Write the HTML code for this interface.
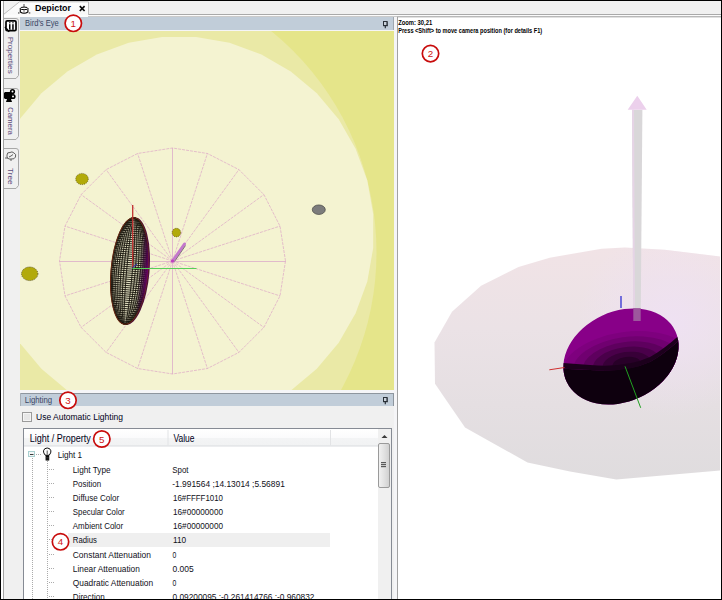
<!DOCTYPE html>
<html><head><meta charset="utf-8">
<style>
html,body{margin:0;padding:0;}
body{width:722px;height:600px;overflow:hidden;position:relative;background:#f0f0f0;font-family:"Liberation Sans",sans-serif;}
svg{position:absolute;left:0;top:0;}
text{font-family:"Liberation Sans",sans-serif;}
</style></head><body>
<svg width="722" height="600" viewBox="0 0 722 600">
<defs>
<linearGradient id="tg" x1="0" y1="0" x2="0" y2="1"><stop offset="0" stop-color="#fefefe"/><stop offset="1" stop-color="#f7f7f7"/></linearGradient>
<linearGradient id="hdr" x1="0" y1="0" x2="0" y2="1"><stop offset="0" stop-color="#ffffff"/><stop offset="0.5" stop-color="#fbfbfc"/><stop offset="0.55" stop-color="#f3f4f5"/><stop offset="1" stop-color="#f1f2f3"/></linearGradient>
<linearGradient id="thumb" x1="0" y1="0" x2="1" y2="0"><stop offset="0" stop-color="#f2f2f2"/><stop offset="0.5" stop-color="#e2e2e2"/><stop offset="1" stop-color="#cfcfcf"/></linearGradient>
<clipPath id="bevc"><rect x="20" y="31" width="374" height="359"/></clipPath>
<clipPath id="rvc"><rect x="398" y="17" width="322" height="582"/></clipPath>
<radialGradient id="disk" cx="0.62" cy="0.35" r="0.7"><stop offset="0" stop-color="#f1e8f2"/><stop offset="0.5" stop-color="#ebe3e7"/><stop offset="1" stop-color="#e6e0e3"/></radialGradient>
<pattern id="wire" width="3" height="3" patternUnits="userSpaceOnUse"><rect width="3" height="3" fill="#f2f0d8"/><path d="M0 0L3 3M3 0L0 3" stroke="#3a3220" stroke-width="0.9"/></pattern>
<radialGradient id="ellg" gradientUnits="userSpaceOnUse" cx="626.5" cy="365" r="62">
<stop offset="0" stop-color="#1a001a"/><stop offset="0.17" stop-color="#280028"/><stop offset="0.3" stop-color="#3c003c"/><stop offset="0.45" stop-color="#560056"/><stop offset="0.62" stop-color="#720072"/><stop offset="0.75" stop-color="#840084"/><stop offset="1" stop-color="#880088"/></radialGradient>
<linearGradient id="diskl" gradientUnits="userSpaceOnUse" x1="0" y1="248" x2="0" y2="480"><stop offset="0" stop-color="#f1e3e6"/><stop offset="0.35" stop-color="#ebe2e6"/><stop offset="1" stop-color="#dfdcde"/></linearGradient>
<radialGradient id="diskh" gradientUnits="userSpaceOnUse" cx="672" cy="322" r="95"><stop offset="0" stop-color="#efe1f3" stop-opacity="0.95"/><stop offset="1" stop-color="#efe1f3" stop-opacity="0"/></radialGradient>
<linearGradient id="ellp" gradientUnits="userSpaceOnUse" x1="132" y1="0" x2="149" y2="0"><stop offset="0.4" stop-color="#2a002a" stop-opacity="0"/><stop offset="0.65" stop-color="#3a003a" stop-opacity="0.6"/><stop offset="0.85" stop-color="#5a005a" stop-opacity="0.9"/><stop offset="1" stop-color="#800080" stop-opacity="1"/></linearGradient>
</defs>

<!-- toolbar -->
<rect x="0" y="0" width="722" height="14" fill="#f0f0f0"/>
<rect x="88" y="14" width="634" height="1" fill="#a9a9a9"/>
<rect x="0" y="15" width="722" height="1" fill="#fbfbfb"/><rect x="4" y="14" width="84" height="3" fill="#fcfcfc"/>
<rect x="88" y="16" width="309" height="1" fill="#cacaca"/><rect x="397" y="16" width="325" height="1" fill="#b8b8b8"/>
<!-- tab -->
<path d="M3.5 14.5 L19.5 1.8 L88.5 1.8 L88.5 14.5" fill="url(#tg)" stroke="#bdbdbd" stroke-width="1"/>

<path d="M24 4 V7" stroke="#707070" stroke-width="1.2"/>
<path d="M20.3 8.4 V12 Q24 14.6 27.9 12 V8.4" fill="#fff" stroke="#000" stroke-width="1.1"/>
<ellipse cx="24.1" cy="8.4" rx="3.8" ry="1.3" fill="#fff" stroke="#000" stroke-width="1"/>
<path d="M24 10 V13.2" stroke="#777" stroke-width="1"/>
<rect x="18" y="12.2" width="1.5" height="1.5" fill="#707070"/><rect x="28.8" y="12.2" width="1.5" height="1.5" fill="#707070"/>
<text x="35" y="11" font-weight="bold" font-size="9" textLength="36" lengthAdjust="spacingAndGlyphs" fill="#000008">Depictor</text>
<path d="M79.8 6.2 L84.6 11 M84.6 6.2 L79.8 11" stroke="#0a0a0a" stroke-width="1.7"/>

<!-- left strip -->
<rect x="1" y="17" width="2" height="583" fill="#ffffff"/>
<rect x="3" y="1" width="1" height="599" fill="#a3a3a3"/><rect x="1" y="1" width="2" height="16" fill="#ffffff"/>
<!-- tabs -->
<g fill="#f0f0f0" stroke="#a8a8a8" stroke-width="1">
<path d="M4 18.5 H16 Q18.5 18.5 18.5 21 V75.5 L16 78.5 H4"/>
<path d="M4 88.5 H16 Q18.5 88.5 18.5 91 V136.5 L16 139.5 H4"/>
<path d="M4 148.5 H16 Q18.5 148.5 18.5 151 V185.5 L16 188.5 H4"/>
</g>
<!-- properties icon -->
<g>
<rect x="6" y="20.8" width="10" height="9.8" rx="1.2" fill="#fff" stroke="#000" stroke-width="1.7"/>
<rect x="9" y="24.2" width="1.5" height="5.6" fill="#000"/><rect x="12.2" y="24.2" width="1.5" height="5.6" fill="#000"/>
<rect x="9" y="22.3" width="1.5" height="1" fill="#000"/><rect x="12.2" y="22.3" width="1.5" height="1" fill="#000"/>
<path d="M5 26.8 L8.6 31.2 L10.2 30" stroke="#000" stroke-width="1.5" fill="#fff"/>
</g>
<text transform="translate(8.4,36.7) rotate(90)" font-size="7.6" textLength="37" lengthAdjust="spacingAndGlyphs" fill="#5a4a7a">Properties</text>
<!-- camera icon -->
<g fill="#000">
<rect x="5" y="92" width="7" height="7"/>
<circle cx="12.5" cy="91.5" r="2.6" fill="#000"/><circle cx="12.5" cy="91.5" r="1" fill="#fff"/>
<circle cx="13" cy="96.5" r="2.6"/><circle cx="13" cy="96.5" r="1" fill="#fff"/>
<path d="M7 99 H11 L12 102 H6 Z"/>
<path d="M4 93 L5 92 V99 L4 98 Z"/>
</g>
<text transform="translate(8.4,107) rotate(90)" font-size="7.6" textLength="28" lengthAdjust="spacingAndGlyphs" fill="#5a4a7a">Camera</text>
<!-- tree icon -->
<g fill="none" stroke="#505050" stroke-width="0.9">
<path d="M9 159 Q6 158 7 155 Q7 152 10 152.5 Q12 151 14 153 Q16.5 154 15.5 157 Q14.5 159.5 11 159 Z"/>
<path d="M11 159 V161 M9 157 L11 156 L13 154.5"/><path d="M5 158 H8"/>
</g>
<text transform="translate(8.4,168) rotate(90)" font-size="7.6" textLength="16.5" lengthAdjust="spacingAndGlyphs" fill="#5a4a7a">Tree</text>

<!-- Bird's eye header -->
<rect x="20" y="17" width="374" height="13" fill="#c1cdd9"/>
<rect x="393" y="17" width="1" height="13" fill="#a0a8b0"/>
<text x="25" y="26.3" font-size="8.6" textLength="33.7" lengthAdjust="spacingAndGlyphs" fill="#3a4664">Bird's Eye</text>
<rect x="383.5" y="21.5" width="3.5" height="4" fill="#c8d0d8" stroke="#2a3038" stroke-width="1"/><path d="M387.3 21.5 V25.8" stroke="#2a3038" stroke-width="0.8"/><path d="M385.3 26 V28.2" stroke="#2a3038" stroke-width="1.2"/><path d="M383 25.8 H388" stroke="#2a3038" stroke-width="0.7"/>
<rect x="20" y="30" width="374" height="1" fill="#f5f5f7"/>

<!-- Bird's eye view -->
<g clip-path="url(#bevc)">
<rect x="20" y="31" width="374" height="359" fill="#e5e58a"/>
<circle cx="91.6" cy="252.3" r="284.9" fill="#eae9a6"/>
<polygon points="162.1,36.9 196.1,36.9 229.5,42.8 261.4,54.5 290.8,71.4 316.8,93.3 338.7,119.3 355.6,148.7 367.3,180.6 373.2,214.0 373.2,248.0 367.3,281.4 355.6,313.3 338.7,342.7 316.8,368.7 290.8,390.6 261.4,407.5 229.5,419.2 196.1,425.1 162.1,425.1 128.7,419.2 96.8,407.5 67.4,390.6 41.4,368.7 19.5,342.7 2.6,313.3 -9.1,281.4 -15.0,248.0 -15.0,214.0 -9.1,180.6 2.6,148.7 19.5,119.3 41.4,93.3 67.4,71.4 96.8,54.5 128.7,42.8" fill="#f4f3d1"/>
<g stroke="#d898c4" stroke-width="0.6" fill="none" stroke-dasharray="3 1">
<polygon points="285.5,261.0 280.0,295.9 263.9,327.4 238.9,352.4 207.4,368.5 172.5,374.0 137.6,368.5 106.1,352.4 81.1,327.4 65.0,295.9 59.5,261.0 65.0,226.1 81.1,194.6 106.1,169.6 137.6,153.5 172.5,148.0 207.4,153.5 238.9,169.6 263.9,194.6 280.0,226.1"/>
<path d="M172.5 261L280.0 295.9M172.5 261L263.9 327.4M172.5 261L238.9 352.4M172.5 261L207.4 368.5M172.5 261L137.6 368.5M172.5 261L106.1 352.4M172.5 261L81.1 327.4M172.5 261L65.0 295.9M172.5 261L65.0 226.1M172.5 261L81.1 194.6M172.5 261L106.1 169.6M172.5 261L137.6 153.5M172.5 261L207.4 153.5M172.5 261L238.9 169.6M172.5 261L263.9 194.6M172.5 261L280.0 226.1"/>
</g>
<path d="M59.5 261.5 H285.5 M172.5 148 V374" stroke="#d8a0c8" stroke-width="0.7" fill="none"/>
<!-- dots -->
<ellipse cx="82" cy="179" rx="6.3" ry="5.6" fill="#b2aa0a" stroke="#3a3000" stroke-width="0.6" stroke-dasharray="1 1"/>
<ellipse cx="176.4" cy="232.6" rx="4.3" ry="4.3" fill="#b2aa0a" stroke="#3a3000" stroke-width="0.6" stroke-dasharray="1 1"/>
<ellipse cx="29.7" cy="273.8" rx="8.2" ry="6.8" fill="#b2aa0a" stroke="#3a3000" stroke-width="0.7" stroke-dasharray="1 1"/>
<ellipse cx="318.8" cy="209.7" rx="6.5" ry="4.8" fill="#7c7c7c" stroke="#303030" stroke-width="0.6"/>
<!-- ellipsoid wireframe -->
<g transform="rotate(5 129.5 271)">
<ellipse cx="130.5" cy="271" rx="19" ry="54" fill="#4a0a44"/>
<ellipse cx="129.5" cy="271" rx="18.5" ry="53.5" fill="#e0dec0"/>
<g fill="none" stroke="#16120a" stroke-width="0.85">
<ellipse cx="129.5" cy="271" rx="18.27" ry="53.5"/>
<ellipse cx="129.5" cy="271" rx="17.59" ry="53.5"/>
<ellipse cx="129.5" cy="271" rx="16.48" ry="53.5"/>
<ellipse cx="129.5" cy="271" rx="14.97" ry="53.5"/>
<ellipse cx="129.5" cy="271" rx="13.08" ry="53.5"/>
<ellipse cx="129.5" cy="271" rx="10.87" ry="53.5"/>
<ellipse cx="129.5" cy="271" rx="8.40" ry="53.5"/>
<ellipse cx="129.5" cy="271" rx="5.72" ry="53.5"/>
<ellipse cx="129.5" cy="271" rx="2.89" ry="53.5"/>
<path d="M125.9 218.5H133.1"/>
<path d="M123.3 220.6H135.7"/>
<path d="M121.5 222.7H137.5"/>
<path d="M120.2 224.8H138.8"/>
<path d="M119.0 226.9H140.0"/>
<path d="M118.0 229.0H141.0"/>
<path d="M117.2 231.1H141.8"/>
<path d="M116.4 233.2H142.6"/>
<path d="M115.7 235.3H143.3"/>
<path d="M115.1 237.4H143.9"/>
<path d="M114.5 239.5H144.5"/>
<path d="M114.0 241.6H145.0"/>
<path d="M113.6 243.7H145.4"/>
<path d="M113.2 245.8H145.8"/>
<path d="M112.8 247.9H146.2"/>
<path d="M112.5 250.0H146.5"/>
<path d="M112.2 252.1H146.8"/>
<path d="M111.9 254.2H147.1"/>
<path d="M111.7 256.3H147.3"/>
<path d="M111.5 258.4H147.5"/>
<path d="M111.4 260.5H147.6"/>
<path d="M111.2 262.6H147.8"/>
<path d="M111.1 264.7H147.9"/>
<path d="M111.1 266.8H147.9"/>
<path d="M111.0 268.9H148.0"/>
<path d="M111.0 271.0H148.0"/>
<path d="M111.0 273.1H148.0"/>
<path d="M111.1 275.2H147.9"/>
<path d="M111.1 277.3H147.9"/>
<path d="M111.2 279.4H147.8"/>
<path d="M111.4 281.5H147.6"/>
<path d="M111.5 283.6H147.5"/>
<path d="M111.7 285.7H147.3"/>
<path d="M111.9 287.8H147.1"/>
<path d="M112.2 289.9H146.8"/>
<path d="M112.5 292.0H146.5"/>
<path d="M112.8 294.1H146.2"/>
<path d="M113.2 296.2H145.8"/>
<path d="M113.6 298.3H145.4"/>
<path d="M114.0 300.4H145.0"/>
<path d="M114.5 302.5H144.5"/>
<path d="M115.1 304.6H143.9"/>
<path d="M115.7 306.7H143.3"/>
<path d="M116.4 308.8H142.6"/>
<path d="M117.2 310.9H141.8"/>
<path d="M118.0 313.0H141.0"/>
<path d="M119.0 315.1H140.0"/>
<path d="M120.2 317.2H138.8"/>
<path d="M121.5 319.3H137.5"/>
<path d="M123.3 321.4H135.7"/>
<path d="M125.9 323.5H133.1"/>
</g>
<ellipse cx="129.5" cy="271" rx="18.5" ry="53.5" fill="none" stroke="#6a2a14" stroke-width="1"/>
<ellipse cx="129.5" cy="271" rx="18.5" ry="53.5" fill="url(#ellp)"/>
</g>
<path d="M132.7 205 V267" stroke="#c03030" stroke-width="1.3"/>
<path d="M132.5 268.5 H196.5" stroke="#58d058" stroke-width="1"/>
<path d="M132.5 267.5 L137 264" stroke="#3030c0" stroke-width="1"/>
<path d="M173 260.5 L184.5 244" stroke="#c478cc" stroke-width="3" stroke-linecap="round"/>
<path d="M174.5 261.5 L185.5 245.5" stroke="#706070" stroke-width="0.9"/>
<circle cx="172.5" cy="261" r="1.6" fill="#c040c0"/>
</g>

<!-- gap -->
<rect x="20" y="390" width="374" height="3" fill="#f5f5f7"/>
<!-- Lighting header -->
<rect x="20" y="393" width="374" height="13" fill="#c1cdd9"/>
<rect x="20" y="393" width="374" height="1" fill="#8e969e"/>
<rect x="393" y="393" width="1" height="13" fill="#8e969e"/>
<rect x="20" y="393" width="1" height="13" fill="#a8b0b8"/>
<text x="24.8" y="402.8" font-size="8.6" textLength="27.4" lengthAdjust="spacingAndGlyphs" fill="#3a4664">Lighting</text>
<rect x="383.5" y="397.5" width="3.5" height="4" fill="#c8d0d8" stroke="#2a3038" stroke-width="1"/><path d="M387.3 397.5 V401.8" stroke="#2a3038" stroke-width="0.8"/><path d="M385.3 402 V404.2" stroke="#2a3038" stroke-width="1.2"/><path d="M383 401.8 H388" stroke="#2a3038" stroke-width="0.7"/>

<!-- checkbox -->
<rect x="22.5" y="412.5" width="9" height="9" fill="#f4f4f4" stroke="#9a9a9a" stroke-width="1"/>
<rect x="24" y="414" width="6" height="6" fill="#e6e6e6"/>
<text x="36" y="419.8" font-size="8.4" textLength="87" lengthAdjust="spacingAndGlyphs" fill="#000018">Use Automatic Lighting</text>

<!-- table -->
<rect x="23.5" y="428.5" width="368" height="175" fill="#ffffff" stroke="#868b94" stroke-width="1"/>
<rect x="24" y="429" width="354" height="17" fill="url(#hdr)"/>
<rect x="24" y="445.5" width="354" height="1" fill="#dadcdf"/>
<rect x="167.5" y="430" width="1" height="15.5" fill="#e2e3e5"/>
<rect x="330" y="430" width="1" height="15.5" fill="#e2e3e5"/>
<text x="29.8" y="442.2" font-size="10.2" textLength="61" lengthAdjust="spacingAndGlyphs" fill="#000018">Light / Property</text>
<text x="173.5" y="442.2" font-size="10.2" textLength="21" lengthAdjust="spacingAndGlyphs" fill="#000018">Value</text>
<!-- scrollbar -->
<rect x="378" y="429" width="13" height="170" fill="#f0f0f0"/>
<path d="M381.5 438 L384.5 435 L387.5 438 Z" fill="#3a3a3a"/>
<rect x="378.5" y="443.5" width="11" height="44" rx="1.5" fill="url(#thumb)" stroke="#9a9a9a" stroke-width="1"/>
<path d="M381 462.5 H386 M381 464.5 H386 M381 466.5 H386" stroke="#5a5a5a" stroke-width="1"/><path d="M381 463.5 H386 M381 465.5 H386 M381 467.5 H386" stroke="#c8c8c8" stroke-width="1"/>

<!-- highlight -->
<rect x="68" y="533" width="262" height="14" fill="#efefef"/>
<!-- tree lines -->
<g stroke="#ababab" stroke-width="1" stroke-dasharray="1 1" fill="none">
<path d="M32.5 458 V600"/>
<path d="M47.5 461 V600"/>
<path d="M36 454.5 H42"/>
<path d="M49 469.5 H55 M49 483.5 H55 M49 497.5 H55 M49 511.5 H55 M49 525.5 H55 M49 539.5 H55 M49 554.5 H55 M49 568.5 H55 M49 582.5 H55 M49 596.5 H55"/>
</g>
<rect x="28.5" y="451.5" width="6" height="5" fill="#f4f6f6" stroke="#a8d0d0" stroke-width="1"/>
<path d="M30 454.5 H33.5" stroke="#3a3a3a" stroke-width="1"/>
<!-- bulb icon -->
<path d="M45.2 455.2 Q43.2 452.8 43.5 450.8 Q44.2 448 47.2 448 Q50.2 448 50.9 450.8 Q51.2 452.8 49.2 455.2 Z" fill="#fff" stroke="#000" stroke-width="0.95"/>
<path d="M47.2 450.5 V454.5" stroke="#555" stroke-width="1"/>
<rect x="45.6" y="455.3" width="3.6" height="5.2" fill="#000"/>
<path d="M45.6 457.3 H49.2 M45.6 459 H49.2" stroke="#666" stroke-width="0.5"/>

<g font-size="8.7" fill="#101020">
<text x="57.7" y="458.4" textLength="24.4" lengthAdjust="spacingAndGlyphs">Light 1</text>
<text x="72.8" y="472.6" textLength="37.8" lengthAdjust="spacingAndGlyphs">Light Type</text>
<text x="72.8" y="486.8" textLength="28.3" lengthAdjust="spacingAndGlyphs">Position</text>
<text x="72.8" y="500.9" textLength="46.3" lengthAdjust="spacingAndGlyphs">Diffuse Color</text>
<text x="72.8" y="515.1" textLength="51.8" lengthAdjust="spacingAndGlyphs">Specular Color</text>
<text x="72.8" y="529.3" textLength="50.4" lengthAdjust="spacingAndGlyphs">Ambient Color</text>
<text x="72.8" y="543.4" textLength="24.1" lengthAdjust="spacingAndGlyphs">Radius</text>
<text x="72.8" y="557.6" textLength="78.1" lengthAdjust="spacingAndGlyphs">Constant Attenuation</text>
<text x="72.8" y="571.8" textLength="67" lengthAdjust="spacingAndGlyphs">Linear Attenuation</text>
<text x="72.8" y="586" textLength="80.3" lengthAdjust="spacingAndGlyphs">Quadratic Attenuation</text>
<text x="72.8" y="600.1" textLength="31.9" lengthAdjust="spacingAndGlyphs">Direction</text>
<text x="172.3" y="472.6" textLength="16.2" lengthAdjust="spacingAndGlyphs">Spot</text>
<text x="172.3" y="486.8" textLength="112.5" lengthAdjust="spacingAndGlyphs">-1.991564 ;14.13014 ;5.56891</text>
<text x="173" y="500.9" textLength="50" lengthAdjust="spacingAndGlyphs">16#FFFF1010</text>
<text x="173" y="515.1" textLength="50" lengthAdjust="spacingAndGlyphs">16#00000000</text>
<text x="173" y="529.3" textLength="50" lengthAdjust="spacingAndGlyphs">16#00000000</text>
<text x="173" y="543.4" textLength="13.2" lengthAdjust="spacingAndGlyphs">110</text>
<text x="172.5" y="557.6" textLength="3.8" lengthAdjust="spacingAndGlyphs">0</text>
<text x="172.5" y="571.8" textLength="21.2" lengthAdjust="spacingAndGlyphs">0.005</text>
<text x="172.5" y="586" textLength="3.8" lengthAdjust="spacingAndGlyphs">0</text>
<text x="172.5" y="600.1" textLength="142" lengthAdjust="spacingAndGlyphs">0.09200095 ;-0.261414766 ;-0.960832</text>
</g>

<!-- right view -->
<rect x="394" y="17" width="3" height="583" fill="#f5f5f7"/>
<rect x="397" y="17" width="1" height="583" fill="#a2a2a2"/>
<rect x="398" y="17" width="323" height="583" fill="#ffffff"/>
<rect x="398" y="17" width="323" height="1" fill="#e0e0e0"/>
<g clip-path="url(#rvc)">
<polygon points="434.5,342.5 452,311.7 481.1,285.7 518.5,267 549.7,257.7 601.6,248.7 624.7,247.6 664.7,249.7 721,256.6 721,470.5 616.3,479.6 570,471.6 527.5,462.5 465,427.5 435,383.75" fill="url(#diskl)"/>
<polygon points="434.5,342.5 452,311.7 481.1,285.7 518.5,267 549.7,257.7 601.6,248.7 624.7,247.6 664.7,249.7 721,256.6 721,470.5 616.3,479.6 570,471.6 527.5,462.5 465,427.5 435,383.75" fill="url(#diskh)"/>
<!-- pole -->
<path d="M632 109.7 H642.4 L640.7 321 H633.3 Z" fill="#d9d7d9"/>
<path d="M632 109.7 H634 L635 321 H633.3 Z" fill="#e6d4e6"/>
<path d="M637.3 95.7 L646.7 109.7 H627.7 Z" fill="#ecd0ec"/>
<!-- ellipsoid -->
<clipPath id="ellc"><ellipse cx="621" cy="356.5" rx="60" ry="45" transform="rotate(-25 621 356.5)"/></clipPath>
<g clip-path="url(#ellc)">
<rect x="550" y="290" width="140" height="130" fill="#880088"/>
<g transform="rotate(-8 626.5 364)">
<ellipse cx="626.5" cy="364" rx="64" ry="32" fill="#7e007e"/>
<ellipse cx="626.5" cy="364" rx="54" ry="27" fill="#700070"/>
<ellipse cx="626.5" cy="364" rx="44" ry="22" fill="#5e005e"/>
<ellipse cx="626.5" cy="364" rx="34" ry="17" fill="#4a004a"/>
<ellipse cx="626.5" cy="364" rx="24" ry="12" fill="#380038"/>
<ellipse cx="626.5" cy="364" rx="14" ry="7" fill="#280028"/>
</g>
<path d="M550 368 L590 370 Q626 373 650 362 Q668 352 690 330 L690 420 L550 420 Z" fill="#0e000e"/>
<path d="M550 362 L590 365 Q626 368 650 357 Q668 347 690 325 L690 330 Q668 352 650 362 Q626 373 590 370 L550 368 Z" fill="#1c001c"/>
</g>
<path d="M633.3 308 L640.7 308 L640.7 321 L633.3 321 Z" fill="#a060a0" opacity="0.9"/>
<path d="M621 296 V308" stroke="#2020d0" stroke-width="1.2"/>
<path d="M549.3 369.8 L564.5 367.5" stroke="#d03030" stroke-width="1"/>
<path d="M625 366.3 L640.7 407.8" stroke="#20a020" stroke-width="1"/>
</g>
<text x="398.2" y="25" font-size="6.3" font-weight="bold" textLength="34" lengthAdjust="spacingAndGlyphs" fill="#000">Zoom: 30,21</text>
<text x="398.2" y="32.5" font-size="6.3" font-weight="bold" textLength="144" lengthAdjust="spacingAndGlyphs" fill="#000">Press &lt;Shift&gt; to move camera position (for details F1)</text>

<!-- annotations -->
<g fill="#ffffff" stroke="#c80c0c" stroke-width="1.7">
<circle cx="73.3" cy="23.3" r="8.2"/>
<circle cx="430.5" cy="53.6" r="8.2"/>
<circle cx="68" cy="400.3" r="8.2"/>
<circle cx="60.5" cy="541.8" r="8.2"/>
<circle cx="101.8" cy="439" r="8.2"/>
</g>
<g fill="#d01414" font-size="9.8" text-anchor="middle">
<text x="73.3" y="26.8">1</text>
<text x="430.5" y="57.1">2</text>
<text x="68" y="403.8">3</text>
<text x="60.5" y="545.3">4</text>
<text x="101.8" y="442.5">5</text>
</g>

<!-- outer border -->
<rect x="0.5" y="0.5" width="721" height="599" fill="none" stroke="#000" stroke-width="1"/>
</svg>
</body></html>
